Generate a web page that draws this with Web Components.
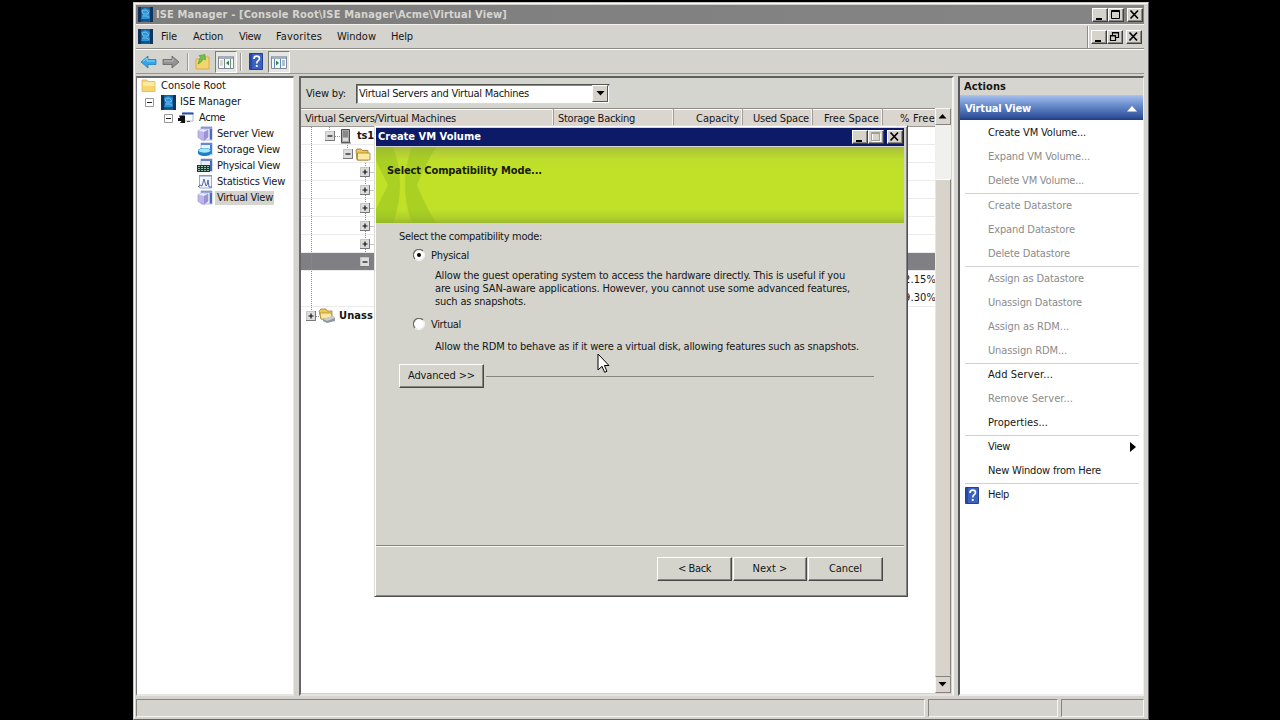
<!DOCTYPE html>
<html lang="en">
<head>
<meta charset="utf-8">
<title>ISE Manager</title>
<style>
html,body{margin:0;background:#000;height:720px;overflow:hidden}
body{font:11px/14px "DejaVu Sans Condensed","DejaVu Sans",sans-serif;font-stretch:condensed;color:#161616;padding-left:133px;box-sizing:border-box;width:1280px}
</style>
</head>
<body>
<ise-window></ise-window>
<script>
const css = s => `<style>:host,*{box-sizing:border-box}${s}</style>`;
const define = (name, html, after) => customElements.define(name, class extends HTMLElement {
  connectedCallback() {
    if (this.shadowRoot) return;
    const root = this.attachShadow({mode: 'open'});
    root.innerHTML = typeof html === 'function' ? html(this) : html;
    if (after) after(this, root);
  }
});
const fit = (text, w, style = '') => `<fit-text w="${w}" style="${style}">${text}</fit-text>`;
const icon = (name, style = '') => `<ui-icon name="${name}" style="${style}"></ui-icon>`;

/* Single line of text whose letter spacing is tuned to a given width */
define('fit-text', css(':host{display:block;flex:none;white-space:pre;height:14px;line-height:14px}span{display:inline-block}') + '<span><slot></slot></span>', (el, root) => {
  const w = +el.getAttribute('w'), span = root.querySelector('span');
  el.style.width = w + 'px';
  const natural = span.getBoundingClientRect().width;
  const n = el.textContent.length;
  if (natural) span.style.letterSpacing = ((w - natural) / n).toFixed(3) + 'px';
});

const cube = `<path d="M4 1h11v13H4z" fill="#e9edfb" stroke="#a9b3dc" stroke-width=".8"/><path d="M4 .800h11v2H4z" fill="#8797d6"/><path d="M12.700 3h2.300v10.500h-2.300z" fill="#4f69bd"/><path d="M1 4.500 5 3l6 1v7l-4 3.500-6-3z" fill="#bcb6ea" stroke="#9b94d0" stroke-width=".6"/><path d="M1 4.500 5 3l6 1-4 2z" fill="#ebe9fc"/><path d="M7 6l4-2v7l-4 3.500z" fill="#9b92d4"/>`;
const ise = `<path d="M0 0h15v15H0z" fill="#17609c"/><path d="M0 0h3v15H0zM12 0h3v15h-3z" fill="#0d3560"/><path d="M3 3l4-2 5 2-1 4 1 4-4 3-5-2 2-4z" fill="#2b93d6"/><path d="M4 4l4-1 3 3-2 1-4 0zM4 9h5l2 1.500" fill="none" stroke="#7cc4ee" stroke-width=".8"/><path d="M3 13h8" stroke="#0a4880" stroke-width="1.500"/>`;
const folder = `<path d="M1 2h5l1 1.500h7v10H1z" fill="#f6d66c" stroke="#dcb85c" stroke-width=".8"/><path d="M2 4h11.500v4H2z" fill="#fceaa4"/>`;
const icons = {
  ise: [15, 15, ise],
  folder: [16, 16, folder],
  site: [16, 16, `<path d="M5 3h10v8H5z" fill="#fff" stroke="#b4bac6"/><path d="M4 2.500h11.500v2H4z" fill="#2451b5"/><path d="M1 5.500h6V13H2l1.500-2H0V8h2z" fill="#111"/><path d="M9 11.500h3" stroke="#555"/>`],
  cube: [16, 16, cube],
  storage: [16, 16, `<path d="M4 1h11v12H4z" fill="#eef4ff" stroke="#9fb2de" stroke-width=".8"/><path d="M4 1h11v2H4z" fill="#6288da"/><path d="M13 3h2v9h-2z" fill="#4b79d5"/><path d="M1 8.500c0-3.500 13-3.500 13 0v2.500c0 4-13 4-13 0z" fill="#1683ca"/><ellipse cx="7.500" cy="8.500" rx="6" ry="2.200" fill="#a6e7fa"/>`],
  physical: [16, 16, `<path d="M4 1h11v12H4z" fill="#e9edfb" stroke="#9aa6d0" stroke-width=".8"/><path d="M4 1h11v2H4z" fill="#6a82c8"/><path d="M13 3h2v10h-2z" fill="#4967b4"/><path d="M0 7h13v7H0z" fill="#23362f"/><path d="M1 8.500h11M1 10.500h11M1 12.500h11" stroke="#8fbfa8" stroke-dasharray="2 1"/>`],
  stats: [16, 16, `<path d="M2.500 1.500h12v12.500h-12z" fill="#f4f6ff" stroke="#9daad0"/><path d="M2 1h13v1.500H2z" fill="#8297d2"/><path d="M1 13l2-2 2 1 2-7 2 7 1-1 1-5 1 7h3" fill="none" stroke="#5a68a0"/>`],
  back: [17, 14, `<path d="M1 7l7-6v3.500h8v5H8V13z" fill="#34a5e7" stroke="#2380be" stroke-width=".8"/><path d="M3 6.500l4-3.500v3h8" fill="none" stroke="#88d6fa"/>`],
  forward: [18, 14, `<path d="M17 7l-7-6v3.500H1v5h9V13z" fill="#939393" stroke="#626262" stroke-width=".8"/><path d="M2 6h9V3.500" fill="none" stroke="#bbb"/>`],
  up: [16, 17, `<path d="M1 6h5l1-2h7v12H1z" fill="#f3d56f" stroke="#cfa443" stroke-width=".8"/><path d="M4 2.500l6-1 .500 5.500-1.700-1C7 7 7 9.500 3 11c1-3 1-5 2.500-6.500z" fill="#74bf48" stroke="#3f8e29" stroke-width=".5"/>`],
  paneL: [16, 15, `<path d="M.5 2.500h15v12H.5z" fill="#f8f8f8" stroke="#808992"/><path d="M1 2h14v3H1z" fill="#a4aeb8"/><path d="M2 7h3M2 9h3M2 11h3" stroke="#b0b8bf"/><path d="M6.500 5v9M12.500 5v9" stroke="#78848f"/><path d="M11 6.500v5L8 9z" fill="#258b40"/>`],
  paneR: [16, 15, `<path d="M.5 2.500h15v12H.5z" fill="#f8f8f8" stroke="#808992"/><path d="M1 2h14v3H1z" fill="#a4aeb8"/><path d="M9.500 5v9M3.500 5v9M11 7h3M11 9h3M11 11h3" stroke="#6089b8"/><path d="M5 6.500v5L8 9z" fill="#258b40"/>`],
  help: [14, 17, `<path d="M.5.500h13v16H.5z" fill="#3a61c2" stroke="#22418f"/><path d="M1 1h2v15H1z" fill="#264a9f"/><path d="M5 6c0-4 5.500-3.500 5.500-.5C10.500 8 7.700 7.500 7.700 10.500" fill="none" stroke="#fff" stroke-width="1.600"/><path d="M6.800 12h1.900v1.900H6.800z" fill="#fff"/>`],
  server: [11, 15, `<path d="M1.500.5h8v13h-8z" fill="#ababab" stroke="#4c4c4c"/><path d="M3 3h5M3 5h5M3 7h5" stroke="#666"/><path d="M3 9h5v3H3z" fill="#ddd"/><path d="M1 14h10" stroke="#666"/>`],
  openfolder: [16, 13, `<path d="M1 2.500L2 1h4l1.500 1.500H13V12H2z" fill="#f0c753" stroke="#96762e" stroke-width=".8"/><path d="M2.500 12V5H15v7z" fill="#fdeaa0" stroke="#a2812f" stroke-width=".8"/>`],
  unassigned: [17, 16, `<path d="M1 3l2-2h5l1 2h5v8H3z" fill="#f0c753" stroke="#a58333" stroke-width=".8"/><path d="M3 11L2 5h11l2 6z" fill="#fdeaa0" stroke="#a58333" stroke-width=".7"/><path d="M5 11l10-3 2 2v3l-8 2-4-2z" fill="#8f969b"/><path d="M5 11l10-3 2 2-8 3z" fill="#c7cdcf"/>`],
  min: [15, 14, '<path d="M4 10h6v2H4z" fill="#000"/>'],
  max: [15, 14, '<path d="M3.500 2.500h8v8h-8zM3 3.500h9" fill="none" stroke="#000"/>'],
  maxoff: [15, 14, '<path d="M4.500 3.500h8v8h-8z" fill="none" stroke="#fff"/><path d="M3.500 2.500h8v8h-8zM3 3.500h9" fill="none" stroke="#a19f98"/>'],
  restore: [15, 14, '<path d="M5.500 5V2.500h6v5H9M5 3h7M3.500 5.500h5v5h-5zM3 6h6" fill="none" stroke="#000" stroke-width="1.200"/>'],
  close: [15, 14, '<path d="M3.500 2.500l7.500 8M11 2.500l-7.500 8" stroke="#000" stroke-width="1.700"/>'],
  plus: [10, 10, '<path d="M.5.500h9v9h-9z" fill="#ddd" stroke="#c5c5c5"/><path d="M9.500 0v9.500H0" fill="none" stroke="#777"/><path d="M2.500 5h5M5 2.500v5" stroke="#111" stroke-width="1.200"/>'],
  minus: [10, 10, '<path d="M.5.500h9v9h-9z" fill="#ddd" stroke="#c5c5c5"/><path d="M9.500 0v9.500H0" fill="none" stroke="#777"/><path d="M2.500 5h5" stroke="#111" stroke-width="1.200"/>'],
  collapse: [9, 9, '<path d="M.5.500h8v8h-8z" fill="#fff" stroke="#989898"/><path d="M2 4.500h5" stroke="#222"/>'],
  arrowUp: [15, 15, '<path d="M7.500 5L11.500 9.500h-8z" fill="#000"/>'],
  arrowDown: [15, 15, '<path d="M7.500 9.500L11.500 5h-8z" fill="#000"/>'],
  whiteUp: [10, 6, '<path d="M5 0l5 5.500H0z" fill="#fff"/>'],
  right: [6, 10, '<path d="M0 0l6 5-6 5z" fill="#000"/>'],
  cursor: [13, 21, '<path d="M1 1v16l4-3.700 2.600 6 2.300-1-2.500-5.800H12z" fill="#fff" stroke="#000"/>']
};
define('ui-icon', el => {
  const [w, h, body] = icons[el.getAttribute('name')];
  return css(`:host{display:block;flex:none;width:${w}px;height:${h}px}svg{display:block}`) + `<svg width="${w}" height="${h}" viewBox="0 0 ${w} ${h}">${body}</svg>`;
});

define('caption-button', el => css(`:host{display:block;flex:none;width:16px;height:14px;background:#d6d3ca;border:1px solid;border-color:#fff #404040 #404040 #fff;box-shadow:inset -1px -1px #8c8c86;overflow:hidden}ui-icon{margin:-1px}`) + icon(el.getAttribute('glyph')));
define('push-button', css(`:host{display:flex;flex:none;align-items:center;justify-content:center;height:24px;background:#d4d4cc;border:1px solid;border-color:#fff #484848 #484848 #fff;box-shadow:inset -1px -1px #85857f}`) + '<slot></slot>');

define('title-bar', css(`:host{display:flex;height:19px;align-items:center;background:linear-gradient(90deg,#7d7d7d,#858585);padding:0 1px 0 2px;color:#d7d5cf;font-weight:bold}.g{flex:1}`) +
  icon('ise', 'margin-right:3px') + fit('ISE Manager - [Console Root\\ISE Manager\\Acme\\Virtual View]', 351) +
  '<i class="g"></i><caption-button glyph="min"></caption-button><caption-button glyph="max"></caption-button><caption-button glyph="close" style="margin-left:3px"></caption-button>');

define('menu-bar', css(`:host{display:flex;height:25px;align-items:center;border-bottom:1px solid #8d8d88;border-top:1px solid #f4f3ee;padding:0 2px 0 2px}.g{flex:1}.s{width:2px;height:22px;border-left:1px solid #8d8d88;border-right:1px solid #fff;margin-right:2px}`) +
  icon('ise') + [['File',16,8],['Action',30,16],['View',22,16],['Favorites',46,15],['Window',39,15],['Help',22,15]].map(([t,w,m]) => fit(t, w, `margin-left:${m}px`)).join('') +
  '<i class="g"></i><i class="s"></i><caption-button glyph="min"></caption-button><caption-button glyph="restore"></caption-button><caption-button glyph="close" style="margin-left:3px"></caption-button>');

define('tool-bar', css(`:host{display:flex;height:25px;align-items:center;border-top:1px solid #fff;border-bottom:1px solid #96968f;padding-left:4px}.s{width:2px;height:18px;border-left:1px solid #9a9a95;border-right:1px solid #f5f5f5}.b{width:22px;height:22px;display:grid;place-items:center;background:#e6e6e3;border:1px solid;border-color:#7b7b77 #fff #fff #7b7b77}`) +
  icon('back') + icon('forward', 'margin-left:5px') + '<i class="s" style="margin:0 6px 0 7px"></i>' + icon('up') +
  `<div class="b" style="margin-left:4px">${icon('paneL')}</div><i class="s" style="margin:0 7px 0 3px"></i>` + icon('help') +
  `<div class="b" style="margin-left:5px">${icon('paneR')}</div>`);

define('console-tree', css(`:host{display:block;background:#fff;border:2px solid;border-color:#6a6a68 #e6e6e2 #e6e6e2 #76767a;border-right-width:1px;border-left-width:1px}.r{display:flex;align-items:center;height:16px}ui-icon{margin-right:4px}.sel{background:#d5d4cf;padding:0 1px 0 2px;margin-left:-2px}`) +
  `<div class="r" style="padding-left:4px">${icon('folder')}${fit('Console Root', 65)}</div>
   <div class="r" style="padding-left:8px">${icon('collapse','margin-right:7px')}${icon('ise')}${fit('ISE Manager', 61)}</div>
   <div class="r" style="padding-left:27px">${icon('collapse','margin-right:5px')}${icon('site','margin-right:5px')}${fit('Acme', 26)}</div>` +
  [['cube','Server View',57],['storage','Storage View',63],['physical','Physical View',63],['stats','Statistics View',68],['cube','Virtual View',56]].map(([i,t,w],k) =>
    `<div class="r" style="padding-left:60px">${icon(i)}<div class="${k===4?'sel':''}">${fit(t,w)}</div></div>`).join(''));

define('combo-box', css(`:host{display:flex;width:254px;height:20px;background:#fff;border:1px solid;border-color:#55554f #d9d9d4 #d9d9d4 #55554f;box-shadow:inset 1px 1px #8b8b85;align-items:center;padding:1px 1px 1px 2px}.g{flex:1}.b{width:16px;height:17px;background:#d6d3cc;border:1px solid;border-color:#fff #555 #555 #fff;overflow:hidden}`) +
  fit('Virtual Servers and Virtual Machines', 170) + `<i class="g"></i><div class="b">${icon('arrowDown')}</div>`);

define('grid-header', css(`:host{display:flex;height:19px;background:#dad5ce;border-top:1px solid #8f8f89;border-bottom:1px solid #9b9b95;box-shadow:inset 0 1px #fff}.c{display:flex;align-items:center;border-right:1px solid #a09d97;box-shadow:inset -1px 0 #f5f2ec;padding:3px 3px 0 4px;overflow:hidden}.n{justify-content:flex-end}`) +
  [['Virtual Servers/Virtual Machines',151,253,''],['Storage Backing',77,120,''],['Capacity',43,69,'n'],['Used Space',56,70,'n'],['Free Space',55,70,'n'],['% Free',35,52,'n']].map(([t,w,cw,c],i) =>
    `<div class="c ${c}" style="width:${cw}px;${i===5?'border:0;box-shadow:none;padding-right:0':''}">${fit(t,w)}</div>`).join(''));

/* Rows of the server tree; indent lines are drawn as dotted guides */
const guide = (x, y1, y2, h) => `<path d="M${x}.5 ${y1}V${y2}${h ? `M${x}.5 9.500H${h}` : ''}"/>`;
const rows = [
  {l: guide(10,0,18)+guide(28,0,4)+'<path d="M34 9.500h6"/>', p: 24, h: icon('minus')+icon('server','margin-left:5px')+fit('ts1',17,'margin-left:6px;font-weight:bold')},
  {l: guide(10,0,18)+guide(46,0,4), p: 42, h: icon('minus')+icon('openfolder','margin-left:2px')},
  ...Array(5).fill({l: guide(10,0,18)+guide(64,0,18,74), p: 59, h: icon('plus')}),
  {sel: 1, l: guide(10,0,18)+guide(64,0,18), p: 59, h: icon('minus')},
  {l: guide(10,0,18), v: '2.15%'},
  {l: guide(10,0,18), v: '9.30%'},
  {l: guide(10,0,5)+'<path d="M15 9.500h4"/>', p: 5, h: icon('plus')+icon('unassigned','margin-left:2px')+fit('Unass',34,'margin-left:4px;font-weight:bold')}
];
define('server-list', css(`:host{display:block;background:#fff;overflow:hidden}.r{display:grid;height:18px;border-bottom:1px solid #ebebeb;align-items:center}.r>*{grid-area:1/1}.sel{background:#7f7f84}.h{display:flex;align-items:center;position:relative}svg{stroke:#8d8d8d;stroke-dasharray:1 1;fill:none}.v{justify-self:end;margin-right:-1px}.none{border-color:#fff}`) +
  rows.map((r,i) => `<div class="r ${r.sel?'sel':''} ${r.v==='2.15%'||i===10?'none':''}"><svg width="80" height="18">${r.l}</svg><div class="h" style="padding-left:${r.p||0}px">${r.h||''}</div>${r.v?`<div class="v">${fit(r.v,32)}</div>`:''}</div>`).join(''));

define('scroll-bar', css(`:host{display:flex;flex-direction:column;width:16px;background:#f0f0ee}.b{height:17px;background:#d9d5ce;border:1px solid;border-color:#f7f7f7 #85827c #85827c #f7f7f7;overflow:hidden}.b.d{border-top-color:#85827c}.t{margin-top:54px;flex:1;background:#d8d4cc;border:1px solid;border-color:#fff #85827c #d8d4cc #e9e6e0}`) +
  `<div class="b">${icon('arrowUp','margin-left:-1px')}</div><div class="t"></div><div class="b d">${icon('arrowDown','margin-left:-1px')}</div>`);

define('virtual-view', css(`:host{display:flex;flex-direction:column;border:2px solid;border-color:#5f5f5f #f4f4f2 #e3e3df #66666a;background:#d5d5cf}.v{display:flex;align-items:center;height:30px;padding:1px 0 0 5px}.m{display:flex;flex:1;background:#fff;margin:0 1px 1px 0}.l{flex:1;min-width:0}`) +
  `<div class="v">${fit('View by:',40,'margin-right:10px')}<combo-box></combo-box></div><div class="m"><div class="l"><grid-header></grid-header><server-list></server-list></div><scroll-bar></scroll-bar></div>`);

define('actions-pane', css(`:host{display:block;background:#fff;border:2px solid;border-color:#5f5f5f #eee #eee #56565a;border-right-width:1px}.t{height:18px;background:#d6d5cf;padding:2px 0 0 4px;font-weight:bold;border-bottom:1px solid #c0c0bc}.h{height:24px;display:flex;align-items:center;justify-content:space-between;padding:1px 6px 0 5px;margin-bottom:1px;color:#fff;font-weight:bold;background:linear-gradient(#a3bdec,#6d90cf 35%,#3a5ca6 80%,#243f83)}.r{height:24px;display:flex;align-items:center;padding:0 8px 0 28px}.q{padding-left:5px}.d{color:#8b8b8b}.s{height:1px;background:#d2d2d2;margin:0 4px 0 5px}.o{margin-bottom:-1px}.g{flex:1}`) +
  `<div class="t">${fit('Actions',42)}</div><div class="h">${fit('Virtual View',66)}${icon('whiteUp')}</div>` +
  [['Create VM Volume...',98],['Expand VM Volume...',102,1],['Delete VM Volume...',96,1],0,['Create Datastore',84,1],['Expand Datastore',87,1],['Delete Datastore',82,1],0,['Assign as Datastore',96,1],['Unassign Datastore',94,1],['Assign as RDM...',81,1],['Unassign RDM...',79,1],1,['Add Server...',65],['Remove Server...',85,1],['Properties...',60],1,['View',22],['New Window from Here',113],1,['Help',21]].map(r =>
    !Array.isArray(r) ? `<div class="s ${r?'o':''}"></div>` : `<div class="r ${r[2]?'d':''} ${r[0]==='Help'?'q':''}">${r[0]==='Help'?icon('help','margin-right:9px'):''}${fit(r[0],r[1])}${r[0]==='View'?'<i class="g"></i>'+icon('right','margin-right:-1px'):''}</div>`).join(''));

define('status-bar', css(`:host{display:flex;gap:3px;height:18px}i{border:1px solid;border-color:#85857f #f5f5f2 #f5f5f2 #85857f;background:#d4d3ce}`) +
  '<i style="flex:1"></i><i style="width:130px"></i><i style="width:83px"></i>');

define('wizard-banner', css(`:host{display:grid;height:76px;background:linear-gradient(#a6b93d,#aec936 5%,#bddd2c 16%,#c0e128 30%,#c0e128 82%,#afd02b 93%,#9dba2d)}:host>*{grid-area:1/1}svg{display:block;grid-area:1/1}fit-text{grid-area:1/1;margin:17px 0 0 11px;font-weight:bold;color:#171c08;position:relative}`) +
  `<svg width="100" height="76"><g fill="#8ab91f" opacity=".4"><path d="M0 0H17Q24 18 24 38Q24 58 17 76H0V62L12 38 0 14z"/><path d="M36 0H60Q50 16 41 38Q50 60 60 76H36Q29 58 29 38Q29 18 36 0z"/></g></svg>` + fit('Select Compatibility Mode...', 155));

define('radio-button', el => css(`:host{display:block;width:12px;height:12px;flex:none}svg{display:block}`) +
  `<svg width="12" height="12"><circle cx="6" cy="6" r="5" fill="#fff"/><path d="M2 10A5.500 5.500 0 0 1 10 2" fill="none" stroke="#696965" stroke-width="1.200"/><path d="M10 2A5.500 5.500 0 0 1 2 10" fill="none" stroke="#f4f4f0"/>${el.hasAttribute('checked')?'<circle cx="6" cy="6" r="2" fill="#000"/>':''}</svg>`);

define('wizard-dialog', css(`:host{display:flex;flex-direction:column;width:534px;height:472px;background:#d4d4cc;border:1px solid;border-color:#dcdcd6 #4d4d50 #4d4d50 #dcdcd6;box-shadow:inset 1px 1px #fff,inset -1px -1px #85858a;padding:2px 3px 2px 1px}.t{height:18px;background:#0c1a67;color:#fff;font-weight:bold;display:flex;align-items:center;padding:0 1px 0 2px}.g{flex:1}wizard-banner{margin-top:1px}.b{flex:1;padding:7px 30px 0 23px}.r{display:flex;align-items:center;height:14px;padding-left:14px}.r fit-text{margin:2px 0 0 6px}.p{padding-left:36px}.p fit-text{height:13px;line-height:13px}.a{display:flex;align-items:center;margin-top:11px}.a i{flex:1;height:1px;background:#85857f;margin-left:2px}.f{height:49px;border-top:1px solid #85857f;box-shadow:inset 0 1px #f6f6f1;display:flex;justify-content:flex-end;padding:11px 21px 0 0;gap:1px}`) +
  `<div class="t">${fit('Create VM Volume',103)}<i class="g"></i><caption-button glyph="min"></caption-button><caption-button glyph="maxoff"></caption-button><caption-button glyph="close" style="margin-left:3px"></caption-button></div>
  <wizard-banner></wizard-banner>
  <div class="b">${fit('Select the compatibility mode:',143)}
  <div class="r" style="margin-top:4px"><radio-button checked></radio-button>${fit('Physical',38)}</div>
  <div class="p" style="margin-top:7px">${fit('Allow the guest operating system to access the hardware directly. This is useful if you',410)}${fit('are using SAN-aware applications. However, you cannot use some advanced features,',415)}${fit('such as snapshots.',91)}</div>
  <div class="r" style="margin-top:9px"><radio-button></radio-button>${fit('Virtual',30)}</div>
  <div class="p" style="margin-top:9px">${fit('Allow the RDM to behave as if it were a virtual disk, allowing features such as snapshots.',424)}</div>
  <div class="a"><push-button style="width:85px">${fit('Advanced &gt;&gt;',67)}</push-button><i></i></div></div>
  <div class="f"><push-button style="width:75px">${fit('&lt; Back',33)}</push-button><push-button style="width:74px">${fit('Next &gt;',35)}</push-button><push-button style="width:75px">${fit('Cancel',33)}</push-button></div>`);

define('ise-window', css(`:host{display:flex;flex-direction:column;position:relative;width:1016px;height:718px;margin-top:2px;background:#d5d3ce;border:1px solid;border-color:#c9c7c2 #64646a #64646a #c9c7c2;box-shadow:inset 1px 1px #f7f7f3;padding:2px 4px 2px 2px}.m{display:grid;grid-template-columns:163px 659px 186px;height:620px;margin:2px 0 3px}console-tree{margin-right:5px}virtual-view{margin-right:4px}wizard-dialog{position:absolute;left:240px;top:122px}.cur{position:absolute;left:463px;top:350px}`) +
  `<title-bar></title-bar><menu-bar></menu-bar><tool-bar></tool-bar><div class="m"><console-tree></console-tree><virtual-view></virtual-view><actions-pane></actions-pane></div><status-bar></status-bar><wizard-dialog></wizard-dialog><ui-icon name="cursor" class="cur"></ui-icon>`);
</script>
</body>
</html>
